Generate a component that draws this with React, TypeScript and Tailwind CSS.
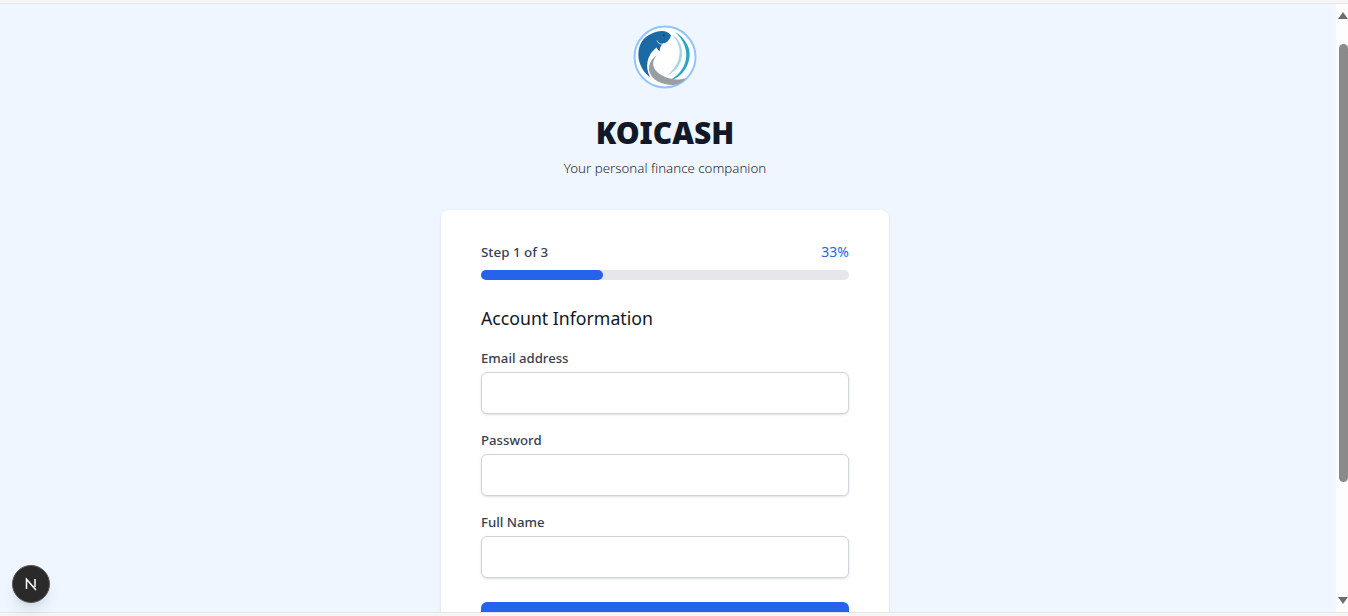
import React from 'react';

const Logo = () => (
  <svg viewBox="0 0 64 64" className="w-16 h-16 block">
    <circle cx="32" cy="32" r="30.5" fill="#ffffff" stroke="#93c5fd" strokeWidth="2" />
    {/* teal swooshes */}
    <path d="M42 7 C51 12 58 22 56.5 32 C55 45 46 54 33 57 C43 53 51 45 53 34 C54.5 24 50 14 42 7 Z" fill="#2aa5c4" />
    <path d="M39 9 C46 14 50 22 49 31 C48 39 43 47 33 51 C41 45 46 37 46.5 29 C47 21 44 15 39 9 Z" fill="#a5d8e6" />
    {/* gray tail */}
    <path d="M24 30 C18 34 14.5 41 16.5 47 C19 55 29 60 40 60 C45 60 50 57 53 53 C47 55 42 55 37 53.5 C29 51.5 22 47 20.5 41 C19.5 37 21.5 33 24 30 Z" fill="#9a9ea3" />
    {/* fish body */}
    <path
      d="M38 10.5 C36 7.5 33 6 29 6 C22 6 13 10 8.5 17 C4.5 24 4.5 33 7.5 40 C9.5 45 13 49.5 17 52 C14.5 47 13.5 42 14.5 37 C15.5 31 19 26 23.5 22.5 C24.5 24.5 26 26 27 26 C26.5 24 27.5 21.5 29 19.5 C33 18 37 15 38 10.5 Z"
      fill="#1b6aa5"
    />
    <path d="M24 15.5 C25 18.5 28 20 31 18.5" fill="none" stroke="#ffffff" strokeWidth="0.8" />
    <circle cx="31" cy="10.5" r="1" fill="#0f3f66" />
  </svg>
);

const Field = ({ label, type = 'text' }: { label: string; type?: string }) => (
  <div>
    <label className="block text-[13.2px] font-medium leading-5 text-[#374151] mb-1">{label}</label>
    <input
      type={type}
      className="block w-full h-[42px] rounded-md border border-[#d1d5db] bg-white shadow-sm"
    />
  </div>
);

export default function App() {
  return (
    <div className="relative h-screen overflow-hidden flex flex-col bg-[#f5f5f5] font-['Noto_Sans','Open_Sans',sans-serif]">
      <div className="flex flex-1 min-h-0 mt-[3px] mb-[3px] border-y border-[#e5e5e5]">
        <main className="flex-1 min-w-0 overflow-hidden bg-[#eff6ff] pr-1.5">
          <div className="flex flex-col items-center pt-[21px]">
            <Logo />
            <h1 className="mt-[26px] text-3xl leading-9 font-black text-[#111827]">KOICASH</h1>
            <p className="mt-[7px] text-[13.3px] leading-5 font-light text-[#1f2937]">Your personal finance companion</p>

            <div className="mt-8 w-full max-w-md shrink-0 rounded-lg bg-white shadow px-10 pt-8 pb-10">
              <div className="flex justify-between leading-5">
                <span className="text-[13.4px] font-medium text-[#374151]">Step 1 of 3</span>
                <span className="text-sm font-normal text-[#2563eb]">33%</span>
              </div>
              <div className="mt-2 h-2.5 rounded-full bg-[#e5e7eb]">
                <div className="h-2.5 rounded-full bg-[#2563eb] w-[33.2%]" />
              </div>

              <h2 className="mt-6 mb-4 text-[17.7px] leading-7 font-normal text-[#111827]">Account Information</h2>

              <div className="flex flex-col gap-4">
                <Field label="Email address" type="email" />
                <Field label="Password" type="password" />
                <Field label="Full Name" />
              </div>

              <button className="block mt-6 w-full h-[42px] rounded-md bg-[#2563eb] text-sm font-medium text-white">
                Next
              </button>
            </div>
          </div>
        </main>

        {/* scrollbar */}
        <div className="w-3 shrink-0 flex flex-col items-end bg-[#fdfdfd] pt-2 pb-2">
          <span className="w-0 h-0 border-x-[5px] border-x-transparent border-b-[7px] border-b-[#6e6e6e]" />
          <div className="mt-[25px] h-[438px] w-[9px] rounded-full bg-[#8a8a8a]" />
          <span className="mt-auto w-0 h-0 border-x-[5px] border-x-transparent border-t-[7px] border-t-[#6e6e6e]" />
        </div>
      </div>

      {/* next.js dev badge */}
      <div className="absolute left-3 bottom-[13px] w-[38px] h-[38px] rounded-full bg-[#2a2a2a] border border-[#555] shadow-lg flex items-center justify-center text-white">
        <svg viewBox="0 0 16 16" className="w-4 h-4" fill="none" stroke="currentColor" strokeWidth="1.5">
          <path d="M3.5 13V3.2L13 14" />
          <path d="M12 3v8" />
        </svg>
      </div>
    </div>
  );
}
